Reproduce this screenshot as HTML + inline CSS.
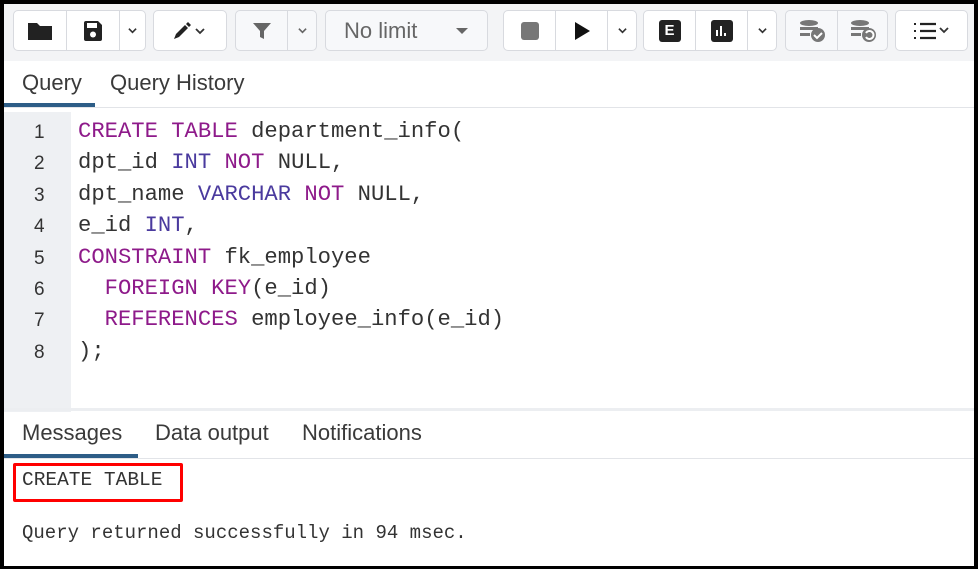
<!DOCTYPE html>
<html><head><style>
body{margin:0;width:978px;height:569px;background:#000;position:relative;overflow:hidden;font-family:"Liberation Sans",sans-serif}
#f{position:absolute;left:4px;top:4px;width:970px;height:562px;background:#fff}
.tb{position:absolute;left:0;top:0;width:970px;height:57px;background:#f3f4f6}
.g{position:absolute;top:6px;height:41px;background:#fff;border:1px solid #d8dadf;border-radius:5px;display:flex;box-sizing:border-box}
.g>div{border-right:1px solid #d8dadf;display:flex;align-items:center;justify-content:center;height:100%}
.g>div:last-child{border-right:none}
.g.dis{background:#f7f8fa}
.chev{width:9px;height:9px}
.tab{position:absolute;font-size:22px;color:#3a3a3a}
.mono{font-family:"Liberation Mono",monospace}
.code{position:absolute;left:74px;top:112px;font-size:22.2px;line-height:31.4px;color:#333;white-space:pre}
.ln{position:absolute;left:0;top:108px;width:67px;height:300px;background:#eef0f3}
.nums{position:absolute;left:30px;top:113px;font-size:19px;line-height:31.4px;color:#333;font-family:"Liberation Sans",sans-serif}
.k{color:#8e1a8a}.t{color:#4a3a9e}
</style></head><body><div id="f">
<div class="tb">
<div class="g" style="left:9px;width:133px"><div style="width:52px"><svg width="26" height="20" viewBox="0 0 26 20"><path d="M1 2h9l3 3h12v14H1z" fill="#222"/></svg></div><div style="width:52px"><svg width="20" height="22" viewBox="0 0 20 22"><path d="M1 3a2 2 0 0 1 2-2h12l4 4v14a2 2 0 0 1-2 2H3a2 2 0 0 1-2-2z" fill="#222"/><rect x="4" y="3" width="10" height="5" fill="#fff"/><circle cx="10" cy="14.5" r="3" fill="#fff"/></svg></div><div style="flex:1"><svg class="chev" viewBox="0 0 10 10"><path d="M1 3l4 4 4-4" stroke="#333" stroke-width="1.8" fill="none"/></svg></div></div>
<div class="g" style="left:149px;width:74px"><div style="flex:1"><svg width="36" height="20" viewBox="0 0 36 20"><path d="M2 18l2-5 9-9 3 3-9 9z M14 3l2-2 3 3-2 2z" fill="#222"/><path d="M24 8l4 4 4-4" stroke="#333" stroke-width="1.8" fill="none"/></svg></div></div>
<div class="g dis" style="left:231px;width:82px"><div style="width:51px"><svg width="20" height="20" viewBox="0 0 20 20"><path d="M1 2h18l-7 8v8l-4-2v-6z" fill="#666"/></svg></div><div style="flex:1"><svg class="chev" viewBox="0 0 10 10"><path d="M1 3l4 4 4-4" stroke="#666" stroke-width="1.8" fill="none"/></svg></div></div>
<div class="g dis" style="left:321px;width:163px"><div style="flex:1;justify-content:space-between;padding:0 18px;font-size:22px;color:#666">No limit<svg width="14" height="8" viewBox="0 0 14 8"><path d="M1 1h12l-6 6z" fill="#666"/></svg></div></div>
<div class="g" style="left:499px;width:134px"><div style="width:51px"><div style="width:18px;height:18px;background:#777;border-radius:3px"></div></div><div style="width:51px"><svg width="18" height="20" viewBox="0 0 18 20"><path d="M2 1l15 9-15 9z" fill="#111"/></svg></div><div style="flex:1"><svg class="chev" viewBox="0 0 10 10"><path d="M1 3l4 4 4-4" stroke="#333" stroke-width="1.8" fill="none"/></svg></div></div>
<div class="g" style="left:639px;width:134px"><div style="width:51px"><div style="width:22px;height:22px;background:#222;border-radius:3px;color:#fff;font-weight:bold;font-size:15px;text-align:center;line-height:22px">E</div></div><div style="width:51px"><svg width="22" height="22" viewBox="0 0 22 22"><rect width="22" height="22" rx="3" fill="#222"/><path d="M6 16V10M10 16V6M14 16v-3" stroke="#fff" stroke-width="2"/></svg></div><div style="flex:1"><svg class="chev" viewBox="0 0 10 10"><path d="M1 3l4 4 4-4" stroke="#333" stroke-width="1.8" fill="none"/></svg></div></div>
<div class="g dis" style="left:781px;width:103px"><div style="width:51px"><svg width="28" height="24" viewBox="0 0 28 24"><ellipse cx="11" cy="4" rx="9" ry="3" fill="#777"/><path d="M2 8h18v3H2zM2 14h10v3H2z" fill="#777"/><circle cx="20" cy="16" r="7" fill="#777"/><path d="M16 16l3 3 5-5" stroke="#fff" stroke-width="2" fill="none"/></svg></div><div style="flex:1"><svg width="28" height="24" viewBox="0 0 28 24"><ellipse cx="11" cy="4" rx="9" ry="3" fill="#777"/><path d="M2 8h18v3H2zM2 14h10v3H2z" fill="#777"/><circle cx="20" cy="16" r="7" fill="#777"/><path d="M17 18a4 4 0 1 0 0-4" stroke="#fff" stroke-width="2" fill="none"/></svg></div></div>
<div class="g" style="left:891px;width:73px"><div style="flex:1"><svg width="40" height="20" viewBox="0 0 40 20"><path d="M8 3h16M8 10h16M8 17h16" stroke="#222" stroke-width="2.2"/><path d="M2 3h2M2 10h2M2 17h2" stroke="#222" stroke-width="2"/><path d="M28 7l4 4 4-4" stroke="#333" stroke-width="1.8" fill="none"/></svg></div></div>
</div>
<div class="tab" style="left:18px;top:66px">Query</div>
<div class="tab" style="left:106px;top:66px">Query History</div>
<div style="position:absolute;left:0;top:99px;width:91px;height:4px;background:#2d5d87"></div>
<div style="position:absolute;left:0;top:103px;width:970px;height:1px;background:#e2e4e8"></div>
<div class="ln"></div>
<div class="nums">1<br>2<br>3<br>4<br>5<br>6<br>7<br>8</div>
<div class="code mono"><span class="k">CREATE TABLE</span> department_info(
dpt_id <span class="t">INT</span> <span class="k">NOT</span> NULL,
dpt_name <span class="t">VARCHAR</span> <span class="k">NOT</span> NULL,
e_id <span class="t">INT</span>,
<span class="k">CONSTRAINT</span> fk_employee
  <span class="k">FOREIGN KEY</span>(e_id)
  <span class="k">REFERENCES</span> employee_info(e_id)
);</div>
<div style="position:absolute;left:0;top:404px;width:970px;height:3px;background:#eceef1"></div>
<div class="tab" style="left:18px;top:416px">Messages</div>
<div class="tab" style="left:151px;top:416px">Data output</div>
<div class="tab" style="left:298px;top:416px">Notifications</div>
<div style="position:absolute;left:0;top:450px;width:134px;height:4px;background:#2d5d87"></div>
<div style="position:absolute;left:0;top:454px;width:970px;height:1px;background:#e2e4e8"></div>
<div style="position:absolute;left:9px;top:459px;width:170px;height:39px;border:3px solid #f00;border-radius:2px;box-sizing:border-box"></div>
<div class="mono" style="position:absolute;left:18px;top:465px;font-size:19.5px;color:#333">CREATE TABLE</div>
<div class="mono" style="position:absolute;left:18px;top:518px;font-size:19px;color:#333">Query returned successfully in 94 msec.</div>
</div></body></html>
